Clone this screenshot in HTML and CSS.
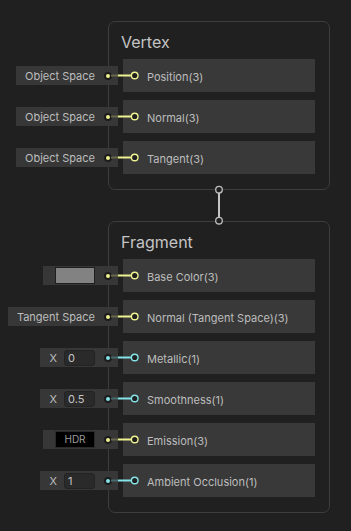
FILE: index.html
```html
<!DOCTYPE html>
<html lang="en">
<head>
  <meta charset="UTF-8" />
  <meta name="viewport" content="width=device-width, initial-scale=1.0"/>
  <title>Master Stack</title>
  <link rel="stylesheet" href="styles.css">
</head>
<body>
  <div class="graph">
    <div class="node">
      <div class="node-title">Vertex</div>
      <div class="slots">
        <div class="slot v3">
          <div class="field"><div class="control"><span class="label">Object Space</span><span class="dot"></span></div></div>
          <div class="port">Position(3)</div>
          <svg class="wire" width="30" height="33"><line class="dim" x1="0" y1="16.5" x2="7" y2="16.5"/><line class="bright" x1="7" y1="16.5" x2="20.5" y2="16.5"/><circle cx="23.7" cy="16.5" r="3.3"/></svg>
        </div>
        <div class="slot v3">
          <div class="field"><div class="control"><span class="label">Object Space</span><span class="dot"></span></div></div>
          <div class="port">Normal(3)</div>
          <svg class="wire" width="30" height="33"><line class="dim" x1="0" y1="16.5" x2="7" y2="16.5"/><line class="bright" x1="7" y1="16.5" x2="20.5" y2="16.5"/><circle cx="23.7" cy="16.5" r="3.3"/></svg>
        </div>
        <div class="slot v3">
          <div class="field"><div class="control"><span class="label">Object Space</span><span class="dot"></span></div></div>
          <div class="port">Tangent(3)</div>
          <svg class="wire" width="30" height="33"><line class="dim" x1="0" y1="16.5" x2="7" y2="16.5"/><line class="bright" x1="7" y1="16.5" x2="20.5" y2="16.5"/><circle cx="23.7" cy="16.5" r="3.3"/></svg>
        </div>
      </div>
    </div>

    <div class="link">
      <svg width="222" height="35">
        <line x1="111" y1="5" x2="111" y2="29.4"/>
        <circle cx="111" cy="1.7" r="3.3"/>
        <circle cx="111" cy="32.7" r="3.3"/>
      </svg>
    </div>

    <div class="node">
      <div class="node-title">Fragment</div>
      <div class="slots">
        <div class="slot v3">
          <div class="field"><div class="control swatch-control"><span class="swatch"></span><span class="dot"></span></div></div>
          <div class="port">Base Color(3)</div>
          <svg class="wire" width="30" height="33"><line class="dim" x1="0" y1="16.5" x2="7" y2="16.5"/><line class="bright" x1="7" y1="16.5" x2="20.5" y2="16.5"/><circle cx="23.7" cy="16.5" r="3.3"/></svg>
        </div>
        <div class="slot v3">
          <div class="field"><div class="control"><span class="label">Tangent Space</span><span class="dot"></span></div></div>
          <div class="port">Normal (Tangent Space)(3)</div>
          <svg class="wire" width="30" height="33"><line class="dim" x1="0" y1="16.5" x2="7" y2="16.5"/><line class="bright" x1="7" y1="16.5" x2="20.5" y2="16.5"/><circle cx="23.7" cy="16.5" r="3.3"/></svg>
        </div>
        <div class="slot v1">
          <div class="field"><div class="control"><span class="axis">X<span class="num">0</span></span><span class="dot"></span></div></div>
          <div class="port">Metallic(1)</div>
          <svg class="wire" width="30" height="33"><line class="dim" x1="0" y1="16.5" x2="7" y2="16.5"/><line class="bright" x1="7" y1="16.5" x2="20.5" y2="16.5"/><circle cx="23.7" cy="16.5" r="3.3"/></svg>
        </div>
        <div class="slot v1">
          <div class="field"><div class="control"><span class="axis">X<span class="num">0.5</span></span><span class="dot"></span></div></div>
          <div class="port">Smoothness(1)</div>
          <svg class="wire" width="30" height="33"><line class="dim" x1="0" y1="16.5" x2="7" y2="16.5"/><line class="bright" x1="7" y1="16.5" x2="20.5" y2="16.5"/><circle cx="23.7" cy="16.5" r="3.3"/></svg>
        </div>
        <div class="slot v3">
          <div class="field"><div class="control swatch-control"><span class="swatch hdr">HDR</span><span class="dot"></span></div></div>
          <div class="port">Emission(3)</div>
          <svg class="wire" width="30" height="33"><line class="dim" x1="0" y1="16.5" x2="7" y2="16.5"/><line class="bright" x1="7" y1="16.5" x2="20.5" y2="16.5"/><circle cx="23.7" cy="16.5" r="3.3"/></svg>
        </div>
        <div class="slot v1">
          <div class="field"><div class="control"><span class="axis">X<span class="num">1</span></span><span class="dot"></span></div></div>
          <div class="port">Ambient Occlusion(1)</div>
          <svg class="wire" width="30" height="33"><line class="dim" x1="0" y1="16.5" x2="7" y2="16.5"/><line class="bright" x1="7" y1="16.5" x2="20.5" y2="16.5"/><circle cx="23.7" cy="16.5" r="3.3"/></svg>
        </div>
      </div>
    </div>
  </div>
</body>
</html>
```

FILE: styles.css
```css
:root {
  --bg-color: #202020;
  --node-border: #3d3d3d;
  --slot-bg: #393939;
  --field-bg: #373737;
  --text-color: #bdbdbd;
  --vec3: #eef290;
  --vec3-dim: #66684c;
  --vec1: #84e4e7;
  --vec1-dim: #466a6c;
}

html, body {
  height: 100%;
}

body {
  margin: 0;
  background-color: var(--bg-color);
  color: var(--text-color);
  font-family: 'Inter', 'Noto Sans', sans-serif;
  overflow: hidden;
}

.graph {
  padding: 21px 0 0 108px;
}

.node {
  box-sizing: border-box;
  width: 222px;
  border: 1px solid var(--node-border);
  border-radius: 7px;
  padding: 10px 14px 15px;
  background-color: var(--bg-color);
}

.node-title {
  font-size: 16px;
  line-height: 20px;
  margin: 0 0 7px -2px;
  color: #c4c4c4;
}

.slots {
  display: flex;
  flex-direction: column;
  gap: 8px;
}

.slot {
  position: relative;
  height: 33px;
  margin-left: -114px;
  display: flex;
  align-items: center;
  gap: 5px;
}

.v3 {
  --c: var(--vec3);
  --dim: var(--vec3-dim);
}

.v1 {
  --c: var(--vec1);
  --dim: var(--vec1-dim);
}

.field {
  width: 109px;
  flex-shrink: 0;
  display: flex;
  justify-content: flex-end;
}

.control {
  box-sizing: border-box;
  flex-shrink: 0;
  height: 19px;
  display: flex;
  align-items: center;
  gap: 9px;
  padding: 0 6px 0 9px;
  background-color: var(--field-bg);
  font-size: 11px;
  white-space: nowrap;
  color: var(--text-color);
}

.swatch-control {
  padding-left: 12px;
}

.dot {
  width: 4px;
  height: 4px;
  border: 2px solid #1c1c1c;
  border-radius: 50%;
  background-color: var(--c);
}

.swatch {
  box-sizing: border-box;
  width: 40px;
  height: 17px;
  border: 1px solid #1f1f1f;
  background-color: #828282;
}

.swatch.hdr {
  background-color: #000;
  border-color: #2a2a2a;
  color: #9c9c9c;
  font-size: 10px;
  line-height: 15px;
  text-align: center;
}

.axis {
  display: flex;
  align-items: center;
  gap: 7px;
}

.num {
  box-sizing: border-box;
  width: 31px;
  height: 16px;
  padding-left: 3px;
  border: 1px solid #232323;
  border-radius: 3px;
  background-color: #2a2a2a;
  line-height: 14px;
  color: #c4c4c4;
}

.port {
  flex: 1;
  align-self: stretch;
  display: flex;
  align-items: center;
  padding: 3px 0 0 24px;
  background-color: var(--slot-bg);
  font-size: 11px;
  white-space: nowrap;
}

.wire {
  position: absolute;
  left: 102px;
  top: 0;
}

.wire line {
  stroke-width: 2;
}

.wire .dim {
  stroke: var(--dim);
}

.wire .bright {
  stroke: var(--c);
}

.wire circle {
  fill: #1f1f1f;
  stroke: var(--c);
  stroke-width: 1.4;
}

.link {
  position: relative;
  height: 31px;
}

.link svg {
  position: absolute;
  left: 0;
  top: -2px;
  overflow: visible;
}

.link line {
  stroke: #c6c6c6;
  stroke-width: 2;
}

.link circle {
  fill: var(--bg-color);
  stroke: #bdbdbd;
  stroke-width: 1.3;
}
```
